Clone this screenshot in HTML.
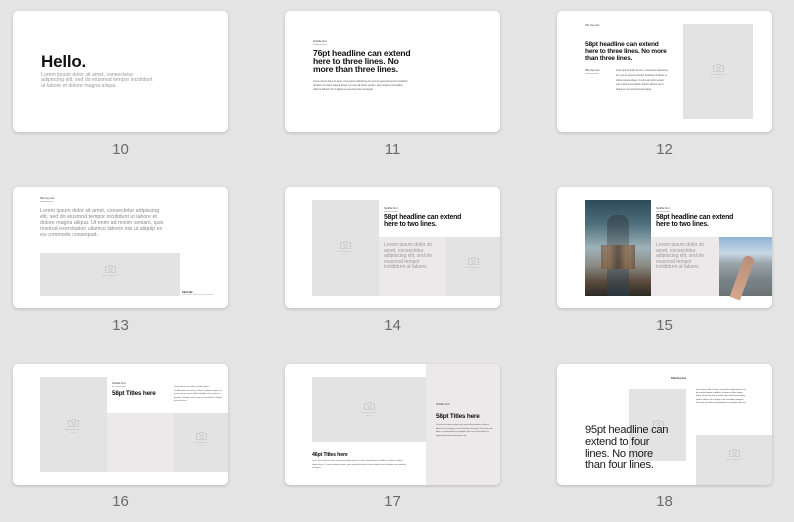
<!DOCTYPE html>
<html><head><meta charset="utf-8"><style>
*{margin:0;padding:0;box-sizing:border-box}
body{width:794px;height:522px;background:#e4e4e4;font-family:"Liberation Sans",Arial,sans-serif;position:relative;overflow:hidden}
.s{position:absolute;width:215px;height:121px;background:#fff;border-radius:5px;overflow:hidden;box-shadow:0 1px 3px rgba(0,0,0,.18)}
.n{position:absolute;width:215px;text-align:center;font-size:15px;color:#6a6a6a}
.a{position:absolute}
.g{background:#e3e3e4}
.p{background:#ede8e9}
.lbl{position:absolute;font-size:2.5px;color:#333;border-bottom:.5px solid #ccc;padding-bottom:1px}
.h{position:absolute;font-weight:bold;color:#111;letter-spacing:-.2px;white-space:nowrap}
.lt{position:absolute;color:#9a9a9a;font-weight:300}
.bt{position:absolute;color:#555;font-size:2.6px;line-height:4px}
.cam{position:absolute;text-align:center;color:#bbb;font-size:2.2px;line-height:2.8px}
.cam svg{display:block;margin:0 auto 2px}
</style></head><body>

<!-- 10 -->
<div class="s" style="left:13px;top:11px">
 <div class="h" style="left:28px;top:41px;font-size:17px">Hello.</div>
 <div class="lt" style="left:28px;top:62px;width:112px;font-size:5.2px;line-height:5.3px">Lorem ipsum dolor sit amet, consectetur adipiscing elit, sed do eiusmod tempor incididunt ut labore et dolore magna aliqua.</div>
</div>
<div class="n" style="left:13px;top:141px">10</div>

<!-- 11 -->
<div class="s" style="left:285px;top:11px">
 <div class="lbl" style="left:28px;top:29px">Subtitle Text</div>
 <div class="h" style="left:28px;top:38px;font-size:8.6px;line-height:8.2px">76pt headline can extend<br>here to three lines. No<br>more than three lines.</div>
 <div class="bt" style="left:28px;top:69px;width:95px;font-size:2.4px;line-height:4.1px">Lorem ipsum dolor sit amet, consectetur adipiscing elit, sed do eiusmod tempor incididunt ut labore et dolore magna aliqua. Ut enim ad minim veniam, quis nostrud exercitation ullamco laboris nisi ut aliquip ex ea commodo consequat.</div>
</div>
<div class="n" style="left:285px;top:141px">11</div>

<!-- 12 -->
<div class="s" style="left:557px;top:11px">
 <div class="lbl" style="left:28px;top:13px;border:0">Title Key text</div>
 <div class="h" style="left:28px;top:30px;font-size:6.6px;line-height:7px">58pt headline can extend<br>here to three lines. No more<br>than three lines.</div>
 <div class="lbl" style="left:28px;top:58px">Title Key text</div>
 <div class="bt" style="left:59px;top:58px;width:52px;font-size:2.3px;line-height:4.8px">Lorem ipsum dolor sit amet, consectetur adipiscing elit, sed do eiusmod tempor incididunt ut labore et dolore magna aliqua. Ut enim ad minim veniam, quis nostrud exercitation ullamco laboris nisi ut aliquip ex ea commodo consequat.</div>
 <div class="a g" style="left:126px;top:13px;width:70px;height:95px"></div>
 <div class="cam" style="left:131px;top:53px;width:60px"><svg width="11" height="8" viewBox="0 0 11 8"><path d="M.5 1.8h3l.8-1.3h2.4l.8 1.3h3v5.7H.5z" fill="none" stroke="#bbb" stroke-width=".6"/><circle cx="5.5" cy="4.6" r="1.6" fill="none" stroke="#bbb" stroke-width=".6"/></svg>Drop image here<br>on us</div>
</div>
<div class="n" style="left:557px;top:141px">12</div>

<!-- 13 -->
<div class="s" style="left:13px;top:187px">
 <div class="lbl" style="left:27px;top:10px">Title Key text</div>
 <div class="lt" style="left:27px;top:21px;width:125px;font-size:5.3px;line-height:6.1px;color:#8a8a8a">Lorem ipsum dolor sit amet, consectetur adipiscing elit, sed do eiusmod tempor incididunt ut labore et dolore magna aliqua. Ut enim ad minim veniam, quis nostrud exercitation ullamco laboris nisi ut aliquip ex ea commodo consequat.</div>
 <div class="a g" style="left:27px;top:66px;width:140px;height:43px"></div>
 <div class="cam" style="left:67px;top:78px;width:60px"><svg width="11" height="8" viewBox="0 0 11 8"><path d="M.5 1.8h3l.8-1.3h2.4l.8 1.3h3v5.7H.5z" fill="none" stroke="#bbb" stroke-width=".6"/><circle cx="5.5" cy="4.6" r="1.6" fill="none" stroke="#bbb" stroke-width=".6"/></svg>Drop image here<br>on us</div>
 <div class="a" style="left:169px;top:104px;font-size:2.4px;font-weight:bold;color:#222">Click title</div>
 <div class="a" style="left:169px;top:107px;font-size:1.8px;color:#999">Lorem ipsum dolor sit amet consectetur</div>
</div>
<div class="n" style="left:13px;top:317px">13</div>

<!-- 14 -->
<div class="s" style="left:285px;top:187px">
 <div class="a g" style="left:27px;top:13px;width:67px;height:96px"></div>
 <div class="cam" style="left:30px;top:54px;width:60px"><svg width="11" height="8" viewBox="0 0 11 8"><path d="M.5 1.8h3l.8-1.3h2.4l.8 1.3h3v5.7H.5z" fill="none" stroke="#bbb" stroke-width=".6"/><circle cx="5.5" cy="4.6" r="1.6" fill="none" stroke="#bbb" stroke-width=".6"/></svg>Drop image here<br>on us</div>
 <div class="lbl" style="left:99px;top:20px">Subtitle Text</div>
 <div class="h" style="left:99px;top:27px;font-size:6.9px;line-height:7.4px">58pt headline can extend<br>here to two lines.</div>
 <div class="a p" style="left:94px;top:50px;width:67px;height:59px"></div>
 <div class="lt" style="left:99px;top:56px;width:55px;font-size:5px;line-height:5.6px">Lorem ipsum dolor sit amet, consectetur adipiscing elit, sed do eiusmod tempor incididunt ut labore.</div>
 <div class="a g" style="left:161px;top:50px;width:54px;height:59px"></div>
 <div class="cam" style="left:163px;top:70px;width:50px"><svg width="11" height="8" viewBox="0 0 11 8"><path d="M.5 1.8h3l.8-1.3h2.4l.8 1.3h3v5.7H.5z" fill="none" stroke="#bbb" stroke-width=".6"/><circle cx="5.5" cy="4.6" r="1.6" fill="none" stroke="#bbb" stroke-width=".6"/></svg>Drop image here<br>on us</div>
</div>
<div class="n" style="left:285px;top:317px">14</div>

<!-- 15 -->
<div class="s" style="left:557px;top:187px">
 <div class="a" style="left:28px;top:13px;width:66px;height:96px;background:linear-gradient(180deg,#2e4a58 0%,#4e6f7c 25%,#9fb2b9 50%,#8c8c86 68%,#5a4a3c 85%,#2c2a26 100%)"></div>
 <div class="a" style="left:50px;top:28px;width:22px;height:81px;background:linear-gradient(180deg,rgba(50,65,75,.7),rgba(90,100,105,.45) 45%,rgba(40,60,70,.7));border-radius:9px 9px 0 0"></div>
 <div class="a" style="left:44px;top:58px;width:34px;height:24px;background:linear-gradient(90deg,#6b4a30,#9a6a3f,#4a3020,#a06e40,#5a3a22);opacity:.6"></div>
 <div class="lbl" style="left:99px;top:20px">Subtitle Text</div>
 <div class="h" style="left:99px;top:27px;font-size:6.9px;line-height:7.4px">58pt headline can extend<br>here to two lines.</div>
 <div class="a p" style="left:94px;top:50px;width:68px;height:59px"></div>
 <div class="lt" style="left:99px;top:56px;width:55px;font-size:5px;line-height:5.6px">Lorem ipsum dolor sit amet, consectetur adipiscing elit, sed do eiusmod tempor incididunt ut labore.</div>
 <div class="a" style="left:162px;top:50px;width:53px;height:59px;background:linear-gradient(180deg,#8fb4d6 0%,#c8d8e6 28%,#9aa4a8 45%,#7b868a 70%,#6c7274 100%)"></div>
 <div class="a" style="left:180px;top:68px;width:11px;height:45px;background:linear-gradient(180deg,#b98f7a,#d4a78c);border-radius:5px 5px 0 0;transform:rotate(20deg)"></div>
</div>
<div class="n" style="left:557px;top:317px">15</div>

<!-- 16 -->
<div class="s" style="left:13px;top:364px">
 <div class="a g" style="left:27px;top:13px;width:67px;height:95px"></div>
 <div class="cam" style="left:30px;top:55px;width:60px"><svg width="11" height="8" viewBox="0 0 11 8"><path d="M.5 1.8h3l.8-1.3h2.4l.8 1.3h3v5.7H.5z" fill="none" stroke="#bbb" stroke-width=".6"/><circle cx="5.5" cy="4.6" r="1.6" fill="none" stroke="#bbb" stroke-width=".6"/></svg>Drop image here<br>on us</div>
 <div class="lbl" style="left:99px;top:18px">Subtitle Text</div>
 <div class="h" style="left:99px;top:26px;font-size:6.4px">58pt Titles here</div>
 <div class="bt" style="left:161px;top:22px;width:48px;font-size:2.1px;line-height:3.6px">Suspendisse nec tellus et odio ultrices condimentum sed et nisi. Mauris sodales tempus sit amet pretium auctor. Nulla interdum vel est vitae a gravida. Curabitur vitae nunc sit amet dolor, volutpat porta rhoncus.</div>
 <div class="a p" style="left:94px;top:49px;width:67px;height:59px"></div>
 <div class="a g" style="left:161px;top:49px;width:54px;height:59px"></div>
 <div class="cam" style="left:163px;top:68px;width:50px"><svg width="11" height="8" viewBox="0 0 11 8"><path d="M.5 1.8h3l.8-1.3h2.4l.8 1.3h3v5.7H.5z" fill="none" stroke="#bbb" stroke-width=".6"/><circle cx="5.5" cy="4.6" r="1.6" fill="none" stroke="#bbb" stroke-width=".6"/></svg>Drop image here<br>on us</div>
</div>
<div class="n" style="left:13px;top:493px">16</div>

<!-- 17 -->
<div class="s" style="left:285px;top:364px">
 <div class="a g" style="left:27px;top:13px;width:114px;height:65px"></div>
 <div class="cam" style="left:54px;top:38px;width:60px"><svg width="11" height="8" viewBox="0 0 11 8"><path d="M.5 1.8h3l.8-1.3h2.4l.8 1.3h3v5.7H.5z" fill="none" stroke="#bbb" stroke-width=".6"/><circle cx="5.5" cy="4.6" r="1.6" fill="none" stroke="#bbb" stroke-width=".6"/></svg>Drop image here<br>on us</div>
 <div class="a p" style="left:141px;top:0;width:74px;height:121px"></div>
 <div class="lbl" style="left:151px;top:39px;border:0">Subtitle Text</div>
 <div class="h" style="left:151px;top:49px;font-size:6.4px">58pt Titles here</div>
 <div class="bt" style="left:151px;top:60px;width:58px;font-size:2px;line-height:3.5px">Ut enim ad minim veniam, quis nostrud exercitation ullamco laboris nisi ut aliquip ex ea commodo consequat. Duis aute irure dolor in reprehenderit in voluptate velit esse cillum dolore eu fugiat nulla pariatur excepteur sint.</div>
 <div class="h" style="left:27px;top:88px;font-size:5.3px">46pt Titles here</div>
 <div class="bt" style="left:27px;top:96px;width:96px;font-size:1.9px;line-height:3.6px">Lorem ipsum dolor sit amet, consectetur adipiscing elit, sed do eiusmod tempor incididunt ut labore et dolore magna aliqua. Ut enim ad minim veniam, quis nostrud exercitation ullamco laboris nisi ut aliquip ex ea commodo consequat.</div>
</div>
<div class="n" style="left:285px;top:493px">17</div>

<!-- 18 -->
<div class="s" style="left:557px;top:364px">
 <div class="a" style="left:114px;top:13px;font-size:2.4px;font-weight:bold;color:#222">Title Key text</div>
 <div class="a g" style="left:72px;top:25px;width:57px;height:72px"></div>
 <div class="cam" style="left:76px;top:56px;width:50px"><svg width="11" height="8" viewBox="0 0 11 8"><path d="M.5 1.8h3l.8-1.3h2.4l.8 1.3h3v5.7H.5z" fill="none" stroke="#bbb" stroke-width=".6"/><circle cx="5.5" cy="4.6" r="1.6" fill="none" stroke="#bbb" stroke-width=".6"/></svg>Drop image here</div>
 <div class="bt" style="left:139px;top:25px;width:52px;font-size:1.9px;line-height:3.2px;color:#444">Lorem ipsum dolor sit amet, consectetur adipiscing elit, sed do eiusmod tempor incididunt ut labore et dolore magna aliqua. Ut enim ad minim veniam, quis nostrud exercitation ullamco laboris nisi ut aliquip ex ea commodo consequat. Duis aute irure dolor in reprehenderit in voluptate velit esse.</div>
 <div class="a g" style="left:139px;top:71px;width:76px;height:50px"></div>
 <div class="cam" style="left:152px;top:85px;width:50px"><svg width="11" height="8" viewBox="0 0 11 8"><path d="M.5 1.8h3l.8-1.3h2.4l.8 1.3h3v5.7H.5z" fill="none" stroke="#bbb" stroke-width=".6"/><circle cx="5.5" cy="4.6" r="1.6" fill="none" stroke="#bbb" stroke-width=".6"/></svg>Drop image here<br>on us</div>
 <div class="a" style="left:28px;top:61px;white-space:nowrap;font-size:11.2px;line-height:11.8px;color:#1a1a1a;letter-spacing:-.3px">95pt headline can<br>extend to four<br>lines. No more<br>than four lines.</div>
</div>
<div class="n" style="left:557px;top:493px">18</div>

</body></html>
